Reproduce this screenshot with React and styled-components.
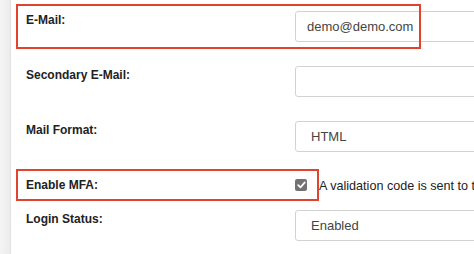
import React from "react";
import styled, { createGlobalStyle } from "styled-components";

const Global = createGlobalStyle`
  html, body {
    margin: 0;
    padding: 0;
    background: #fff;
    overflow: hidden;
  }
  body {
    font-family: "Liberation Sans", Arial, Helvetica, sans-serif;
  }
`;

const Page = styled.div`
  display: flex;
  width: 474px;
  height: 254px;
  overflow: hidden;
`;

const Rail = styled.div`
  flex: 0 0 10px;
  background: linear-gradient(to right, #f4f4f4, #ececec);
  border-right: 1px solid #e2e2e2;
`;

const Form = styled.div`
  flex: 1;
  min-width: 0;
  display: flex;
  flex-direction: column;
  padding: 11px 0 0 15px;
`;

const Row = styled.div`
  position: relative;
  display: flex;
  align-items: flex-start;
  height: ${(p) => p.$h}px;
  flex: none;
`;

const Label = styled.div`
  flex: 0 0 269px;
  padding-top: 1px;
  font-size: 12px;
  line-height: 16px;
  font-weight: bold;
  color: #222;
`;

const TextInput = styled.input`
  box-sizing: border-box;
  flex: none;
  width: 230px;
  height: 31px;
  margin: 0;
  padding: 0 11px;
  border: 1px solid #d2d2d2;
  border-radius: 3px;
  font-family: inherit;
  font-size: 13px;
  color: #444;
  background: #fff;
  outline: none;
`;

const Select = styled.select`
  box-sizing: border-box;
  flex: none;
  width: 230px;
  height: 31px;
  margin: 0;
  padding: 0 15px;
  border: 1px solid #d2d2d2;
  border-radius: 3px;
  font-family: inherit;
  font-size: 13px;
  color: #444;
  background: #fff;
  appearance: none;
  outline: none;
`;

const Check = styled.span`
  box-sizing: border-box;
  flex: none;
  width: 12px;
  height: 12px;
  margin-top: 3px;
  border-radius: 2px;
  background: #737373;
  display: flex;
  align-items: center;
  justify-content: center;
`;

const Hint = styled.span`
  margin: 2px 0 0 12px;
  font-size: 12.6px;
  line-height: 16px;
  color: #222;
  white-space: nowrap;
`;

const Callout = styled.div`
  position: absolute;
  left: -10px;
  top: -7px;
  width: ${(p) => p.$w}px;
  height: ${(p) => p.$h}px;
  box-sizing: border-box;
  border: 2px solid #e2432c;
  pointer-events: none;
`;

export default function App() {
  return (
    <>
      <Global />
      <Page>
        <Rail />
        <Form>
          <Row $h={55}>
            <Label>E-Mail:</Label>
            <TextInput defaultValue="demo@demo.com" />
            <Callout $w={405} $h={45} />
          </Row>
          <Row $h={55}>
            <Label>Secondary E-Mail:</Label>
            <TextInput defaultValue="" />
          </Row>
          <Row $h={55}>
            <Label>Mail Format:</Label>
            <Select defaultValue="HTML">
              <option>HTML</option>
              <option>Text</option>
            </Select>
          </Row>
          <Row $h={34}>
            <Label>Enable MFA:</Label>
            <Check>
              <svg width="9" height="8" viewBox="0 0 9 8">
                <path d="M1.2 4.2 L3.5 6.4 L7.8 1.4" fill="none" stroke="#fff" strokeWidth="1.7" strokeLinecap="round" strokeLinejoin="round" />
              </svg>
            </Check>
            <Hint>A validation code is sent to the e-mail address</Hint>
            <Callout $w={303} $h={32} />
          </Row>
          <Row $h={55}>
            <Label>Login Status:</Label>
            <Select defaultValue="Enabled">
              <option>Enabled</option>
              <option>Disabled</option>
            </Select>
          </Row>
        </Form>
      </Page>
    </>
  );
}
